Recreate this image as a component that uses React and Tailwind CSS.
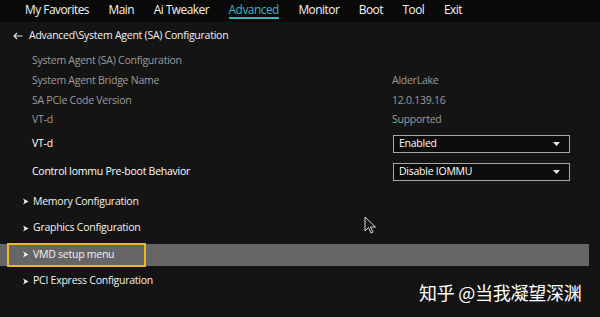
import React from "react";

const tabs = ["My Favorites", "Main", "Ai Tweaker", "Advanced", "Monitor", "Boot", "Tool", "Exit"];

const info = [
  ["System Agent (SA) Configuration", ""],
  ["System Agent Bridge Name", "AlderLake"],
  ["SA PCIe Code Version", "12.0.139.16"],
  ["VT-d", "Supported"],
];

const subMenus = ["Memory Configuration", "Graphics Configuration", "VMD setup menu", "PCI Express Configuration"];

const Select = ({ value }) => (
  <div className="flex h-[18px] w-[177px] items-center justify-between border border-[#a8a8a8] bg-[#0c0c0c] pl-[5px] pr-[9px] text-white">
    <span>{value}</span>
    <svg width="7" height="4" viewBox="0 0 7 4">
      <path d="M0 0h7L3.5 4z" fill="#e8e8e8" />
    </svg>
  </div>
);

const Arrow = () => (
  <svg width="7" height="7" viewBox="0 0 7 7" className="mr-[4px]">
    <path d="M1 0.5L6.5 3.5L1 6.5L2.5 3.5z" fill="#f2f2f2" />
  </svg>
);

const App = () => {
  return (
    <div
      className="relative flex h-[317px] w-[600px] overflow-hidden bg-[#141414] text-[10.5px] tracking-[-0.25px]"
      style={{ fontFamily: '"Open Sans", "Noto Sans", sans-serif' }}
    >
      <div className="flex flex-1 flex-col">
        <nav className="flex h-[22px] items-start gap-[19.5px] bg-[#0a0a0a] pl-[25px] pt-[2px] text-[11.9px] tracking-[-0.5px] text-[#f4f4f4]">
          {tabs.map((t) => (
            <span
              key={t}
              className={t === "Advanced" ? "border-b-2 border-[#3bb3bd] leading-[15px] text-[#3bb3bd]" : "leading-[15px]"}
            >
              {t}
            </span>
          ))}
        </nav>

        <div className="flex h-[28px] items-center pl-[13px] text-[#f2f2f2]">
          <svg width="10" height="8" viewBox="0 0 10 8" className="mr-[6px]">
            <path d="M9.5 4H1M4 1L1 4l3 3" fill="none" stroke="#e6e6e6" strokeWidth="1.1" />
          </svg>
          <span>Advanced\System Agent (SA) Configuration</span>
        </div>

        <div className="flex flex-col pl-[32px] pr-[30px] pt-[1px] text-[#9c9c9c]">
          {info.map(([k, v], i) => (
            <div key={i} className="flex h-[19.8px] items-center">
              <span className="w-[360px]">{k}</span>
              <span>{v}</span>
            </div>
          ))}
          <div className="mt-[2px] flex h-[24px] items-center text-white">
            <span className="w-[361px]">VT-d</span>
            <Select value="Enabled" />
          </div>
          <div className="mt-[4px] flex h-[24px] items-center text-white">
            <span className="w-[361px]">Control Iommu Pre-boot Behavior</span>
            <Select value="Disable IOMMU" />
          </div>
        </div>

        <div className="mt-[4px] flex flex-col text-[#f2f2f2]">
          {subMenus.map((m) => {
            const active = m === "VMD setup menu";
            return (
              <div key={m} className="flex h-[26.6px] items-center">
                {active ? (
                  <div className="mr-[11px] flex h-[22px] flex-1 items-center bg-[#666666] pl-[7px]">
                    <div className="flex h-[24px] w-[139px] items-center border-2 border-[#e9b824] pl-[13px]">
                      <Arrow />
                      {m}
                    </div>
                  </div>
                ) : (
                  <div className="flex items-center pl-[22px]">
                    <Arrow />
                    {m}
                  </div>
                )}
              </div>
            );
          })}
        </div>
      </div>

      <div className="w-[6px] bg-[#0e0e0e]" />

      <svg className="absolute left-[364px] top-[216px]" width="13" height="18" viewBox="0 0 13 18">
        <path d="M1 1v14l3.5-3.5 2.5 5.5 2-1-2.5-5h5z" fill="#161616" stroke="#d8d8d8" strokeWidth="1" />
      </svg>

      <div
        className="absolute left-[419px] top-[279px] text-[18px] text-white"
        style={{ fontFamily: '"Noto Sans CJK SC", "Noto Sans", sans-serif' }}
      >
        知乎 @当我凝望深渊
      </div>
    </div>
  );
};

export default App;
